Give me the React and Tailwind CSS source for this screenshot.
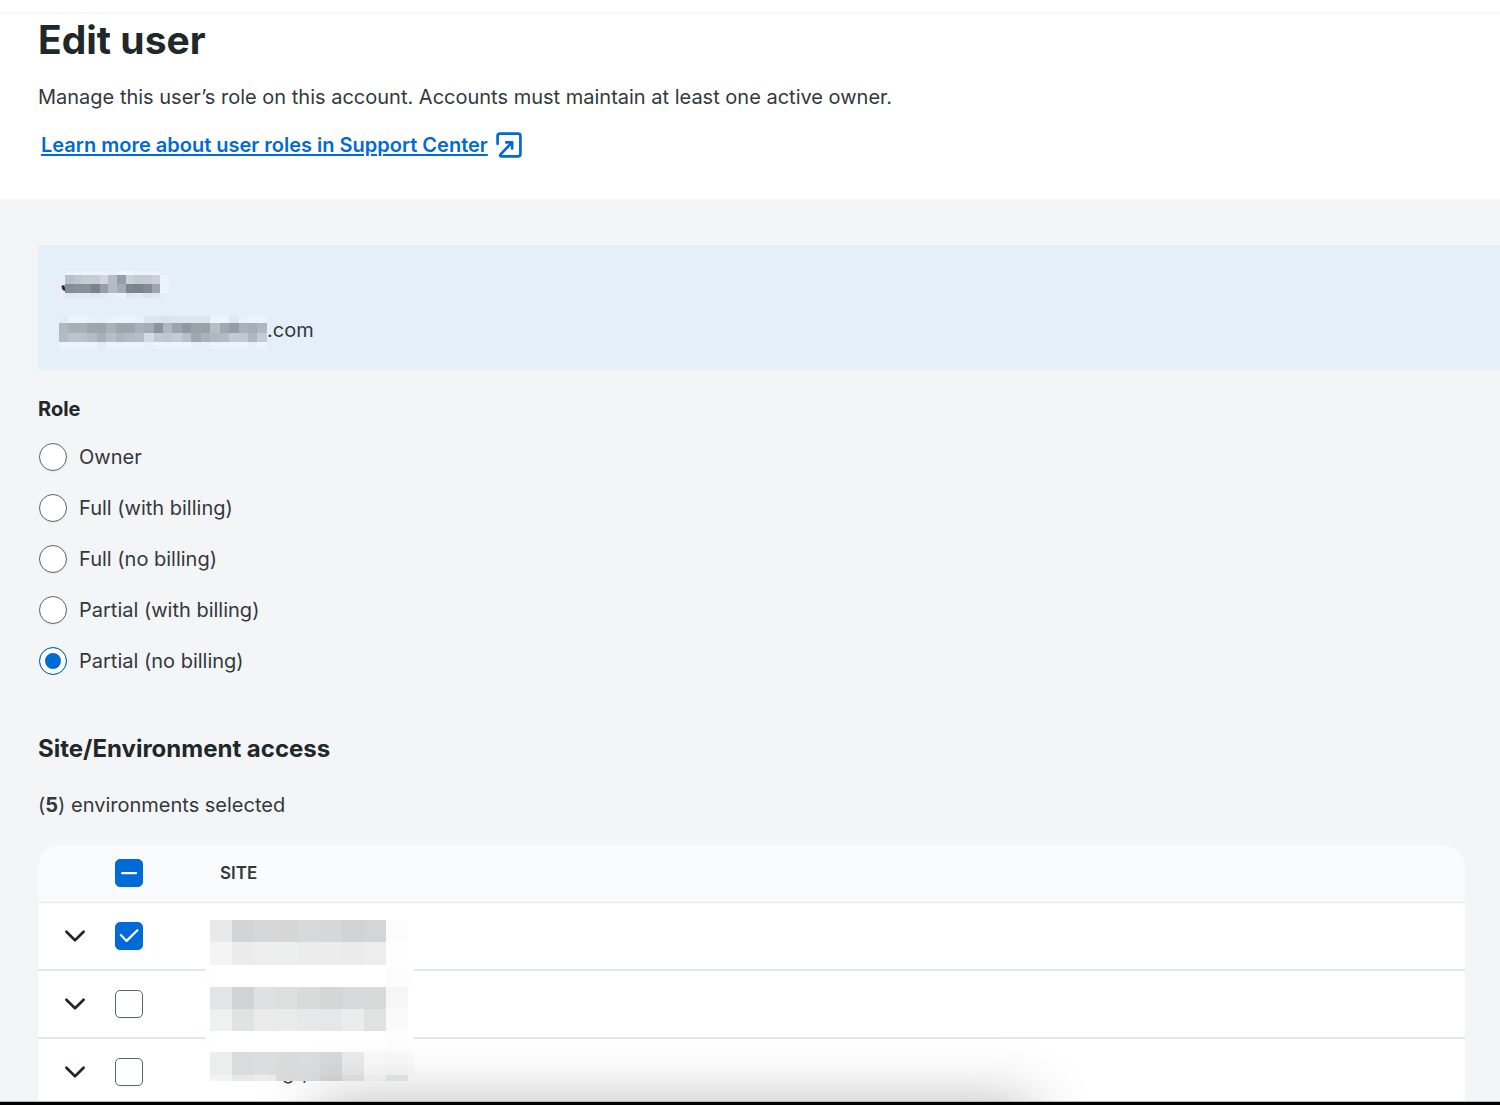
import React, { useState } from 'react';

const ROLES = [
  { value: 'owner', label: 'Owner' },
  { value: 'full-billing', label: 'Full (with billing)' },
  { value: 'full', label: 'Full (no billing)' },
  { value: 'partial-billing', label: 'Partial (with billing)' },
  { value: 'partial', label: 'Partial (no billing)' },
];

const SITES = [
  { id: 'site-1', tail: '' },
  { id: 'site-2', tail: '' },
  { id: 'site-3', tail: 'grp' },
];

// Redaction blocks: each row is { y, h, colors }, null leaves a cell empty
const NAME_MASK = [
  { y: 0, h: 4, colors: ['#ebf3fb', '#ebf3fb', '#ebf3fb', '#ebf3fb', '#ebf3fb', '#e8f1fa', '#edf5fd', '#edf5fd', '#ebf3fb', '#ebf3fb', '#ebf3fb', null] },
  { y: 4, h: 9, colors: ['#b7c0c5', '#bfc7cc', '#c4ccd4', '#c4cdd3', '#cfd7db', '#b5bec8', '#969eaa', '#c8d0d8', '#c2cad2', '#c2cad2', '#c9d0d8', '#ebf3fd'] },
  { y: 13, h: 9, colors: ['#858d97', '#88909a', '#88909a', '#7a828a', '#969fa8', '#b2bbc7', '#a2abb6', '#7c848d', '#7a828b', '#838b96', '#9da6b0', '#ebf3fd'] },
  { y: 22, h: 5, colors: ['#dfe8f0', '#e1eaf3', '#e1eaf3', '#dfe8f0', '#e2ebf5', '#e6eff9', '#ebf4fd', '#dde6ee', '#e2ebf4', '#dde6ee', '#dfe8f0', null] },
];

const EMAIL_MASK = [
  { y: 0, h: 7, colors: ['#e3ecf6', '#ebf4fe', '#ebf4fe', '#e9f2fc', '#e6f0fa', '#e9f2fc', '#ebf4fe', '#ebf4fe', '#e9f2fc', '#dce5ee', '#dce5ee', '#d9e2ea', '#dce5ed', '#dee7f0', '#dce5ee', '#dce5ee', '#ebf4fe', '#ebf4fe', '#dfe8f1', '#e9f2fc', '#ebf4fe', '#ebf4fe'] },
  { y: 7, h: 10, colors: ['#b0b8c0', '#a7afb7', '#a7afb7', '#9da5ad', '#9da5ad', '#a9b1b9', '#9da5ad', '#9da5ad', '#a9b2bb', '#a3abb4', '#89929d', '#afb8c2', '#9da6b0', '#919aa4', '#9ba3ac', '#98a0a8', '#b6bfc8', '#a0a9b2', '#959ea7', '#a9b1ba', '#a5adb6', '#afb7c1'] },
  { y: 17, h: 9, colors: ['#b3bbc3', '#bcc5cb', '#bac3c9', '#b4bcc4', '#a7afb7', '#b7c0c8', '#adb6be', '#b3bcc4', '#b6bfc6', '#d1dbe7', '#c0cad0', '#bdc7cc', '#c3ccd2', '#b8c1c7', '#9fa8b0', '#aab3ba', '#b0b9c0', '#b3bcc3', '#c2cbd2', '#c0c9d0', '#adb6be', '#c3ccd3'] },
  { y: 26, h: 7, colors: ['#ebf4fe', '#ebf4fe', '#ebf4fe', '#ebf4fe', '#e3ecf6', '#ebf4fe', '#ebf4fe', '#ebf4fe', '#ebf4fe', '#e6effa', '#ebf4fe', '#ebf4fe', '#ebf4fe', '#ebf4fe', '#e6effa', '#e6effa', '#ebf4fe', '#ebf4fe', '#ebf4fe', '#ebf4fe', '#e6effa', '#ebf4fe'] },
];

const SITE_MASK = [
  { y: 0, h: 22, colors: ['#e9e9ea', '#d3d4d6', '#d6d7d9', '#d5d6d5', '#d8d9db', '#d6d7d9', '#d1d2d4', '#d4d5d7', '#fcfcfc'] },
  { y: 22, h: 23, colors: ['#f4f4f4', '#ebebeb', '#eeeeee', '#edefee', '#ececec', '#ececec', '#ebebeb', '#ededed', '#fefefe'] },
  { y: 45, h: 22, colors: ['#ffffff', '#ffffff', '#ffffff', '#ffffff', '#ffffff', '#ffffff', '#ffffff', '#ffffff', '#fdfdfd'] },
  { y: 67, h: 22, colors: ['#e3e4e6', '#d1d2d4', '#dfe0e2', '#dddfde', '#d9dbda', '#d5d7d6', '#d7d8da', '#d7d9d8', '#f6f6f6'] },
  { y: 89, h: 22, colors: ['#eff1f0', '#e1e3e2', '#ebebeb', '#e9ebea', '#e7e8ea', '#e6e7e9', '#ebedec', '#e0e2e1', '#fafafa'] },
  { y: 111, h: 21, colors: ['#ffffff', '#ffffff', '#ffffff', '#ffffff', '#ffffff', '#ffffff', '#ffffff', '#ffffff', '#fdfdfd'] },
  { y: 132, h: 23, colors: ['#eceeed', '#dadbdd', '#dcdddf', '#dadcdb', '#dcdddf', '#d8d9db', '#ebebeb', '#fbfbfb', '#f9f9f9'] },
  { y: 155, h: 6, colors: ['#f3f3f3', '#e7e8ea', '#ebecee', '#dadcdb', '#dcdddf', '#dad6d5', '#e6e6e6', '#f9f9f9', '#e9edec'] },
];

const Mosaic = ({ rows, cell }) =>
  rows.map((row) =>
    row.colors.map((color, i) =>
      color ? (
        <rect
          key={`${row.y}-${i}`}
          x={i * cell}
          y={row.y}
          width={cell + 0.2}
          height={row.h}
          fill={color}
        />
      ) : null,
    ),
  );

const ExternalIcon = () => (
  <svg width="26" height="26" viewBox="0 0 26 26" fill="none" stroke="currentColor" strokeWidth="2.7" strokeLinecap="round" strokeLinejoin="round" aria-hidden="true">
    <path d="M1.6 11.8V4a2.4 2.4 0 0 1 2.4-2.4h18A2.4 2.4 0 0 1 24.4 4v18a2.4 2.4 0 0 1-2.4 2.4H5.4c-1.2 0-1.6-1.2-.8-2L15.8 10.6" />
    <path d="M10.2 10.4h5.9v6" />
  </svg>
);

const ChevronIcon = () => (
  <svg width="22" height="14" viewBox="0 0 22 14" fill="none" stroke="currentColor" strokeWidth="2.7" strokeLinecap="round" strokeLinejoin="round" aria-hidden="true">
    <path d="M2.4 2.8 11 11.2l8.6-8.4" />
  </svg>
);

const Checkbox = ({ label, checked, indeterminate, onChange }) => (
  <span className="grid size-7 place-items-center">
    <input
      type="checkbox"
      aria-label={label}
      checked={checked}
      onChange={onChange}
      className={`col-start-1 row-start-1 size-7 cursor-pointer appearance-none rounded-[5px] border shadow-xs ${
        checked || indeterminate ? 'border-[#006bd6] bg-[#006bd6]' : 'border-[#5a666f] bg-white'
      }`}
    />
    {(checked || indeterminate) && (
      <svg
        viewBox="0 0 28 28"
        className="pointer-events-none col-start-1 row-start-1 size-7"
        fill="none"
        stroke="white"
        strokeWidth="2.2"
        strokeLinecap="round"
        strokeLinejoin="round"
        aria-hidden="true"
      >
        {indeterminate ? <path d="M7.2 14.2h13.8" /> : <path d="M5.8 13 11.6 18.9 22.4 8.2" />}
      </svg>
    )}
  </span>
);

const App = () => {
  const [role, setRole] = useState('partial');
  const [selected, setSelected] = useState(['site-1']);

  const toggleSite = (id) =>
    setSelected((prev) =>
      prev.includes(id) ? prev.filter((s) => s !== id) : [...prev, id],
    );

  const allSelected = selected.length === SITES.length;
  const toggleAll = () => setSelected(allSelected ? [] : SITES.map((s) => s.id));

  return (
    <div className="flex h-screen flex-col overflow-hidden bg-[#f4f5f7] font-['Inter',sans-serif] text-xl leading-6 text-[#32393c]">
      <div className="relative min-h-0 flex-1 overflow-hidden">
        <header className="bg-white pt-3">
          <div className="border-t-2 border-[#f4f6f7] pb-[41px] pl-[38px]">
            <h1 className="pt-1 text-[39px] leading-[44px] font-bold text-[#21282a]">Edit user</h1>
            <p className="mt-[23px]">
              Manage this user’s role on this account. Accounts must maintain at least one active owner.
            </p>
            <a
              href="#support"
              className="mt-[23px] ml-[3px] inline-flex items-center gap-2 align-top font-semibold text-[#006bd6]"
            >
              <span className="underline decoration-2 underline-offset-2">
                Learn more about user roles in Support Center
              </span>
              <ExternalIcon />
            </a>
          </div>
        </header>

        <main className="pt-[46px] pl-[38px]">
          <section className="bg-[#e5effa] pt-[26px] pb-[21px] pl-[21px]">
            <div className="relative h-[27px] leading-[27px] font-bold text-[#21282a]">
              <span className="pl-[2px]">J</span>
              <svg className="absolute top-0 left-[6px]" width="104" height="27" viewBox="0 0 104 27" shapeRendering="crispEdges" aria-hidden="true">
                <Mosaic rows={NAME_MASK} cell={8.67} />
              </svg>
            </div>
            <div className="mt-[18px] flex">
              <svg width="208" height="33" viewBox="0 0 208 33" shapeRendering="crispEdges" aria-hidden="true">
                <Mosaic rows={EMAIL_MASK} cell={9.45} />
              </svg>
              <span className="leading-7">.com</span>
            </div>
          </section>

          <fieldset className="mt-[27px]">
            <legend className="font-bold text-[#21282a]">Role</legend>
            <div className="mt-[22px] flex flex-col gap-[23px]">
              {ROLES.map((r) => (
                <label key={r.value} className="flex w-fit cursor-pointer items-center gap-3 pl-px leading-7">
                  <input
                    type="radio"
                    name="role"
                    value={r.value}
                    checked={role === r.value}
                    onChange={() => setRole(r.value)}
                    className="size-7 shrink-0 appearance-none rounded-full border border-[#5a666f] bg-white shadow-xs checked:border-[#006bd6] checked:bg-[#006bd6] checked:shadow-[inset_0_0_0_5px_white]"
                  />
                  {r.label}
                </label>
              ))}
            </div>
          </fieldset>

          <h2 className="mt-[58px] text-2xl leading-8 font-bold text-[#21282a]">Site/Environment access</h2>
          <p className="mt-7">
            (<b className="font-bold">5</b>) environments selected
          </p>

          <div className="relative mt-7 mr-[35px] overflow-hidden rounded-t-[24px] bg-white">
            <table className="w-full border-collapse text-left">
              <thead>
                <tr className="h-[57px] border-b border-[#e3e8ea] bg-[#fafbfd]">
                  <th className="w-[77px]"></th>
                  <th className="w-[105px]">
                    <Checkbox
                      label="Select all sites"
                      checked={allSelected}
                      indeterminate={selected.length > 0 && !allSelected}
                      onChange={toggleAll}
                    />
                  </th>
                  <th className="text-[17px] font-semibold">SITE</th>
                </tr>
              </thead>
              <tbody>
                {SITES.map((site, i) => (
                  <tr key={site.id} className="h-[68px] border-b-2 border-[#e3e8ed]">
                    <td>
                      <button
                        type="button"
                        aria-label={`Expand site ${i + 1}`}
                        className="ml-[26px] flex size-[22px] items-center justify-center text-[#21282a]"
                      >
                        <ChevronIcon />
                      </button>
                    </td>
                    <td>
                      <Checkbox
                        label={`Select site ${i + 1}`}
                        checked={selected.includes(site.id)}
                        onChange={() => toggleSite(site.id)}
                      />
                    </td>
                    <td className="pl-[62px]">{site.tail}</td>
                  </tr>
                ))}
              </tbody>
            </table>
            <svg className="absolute top-[75px] left-[168px]" width="208" height="161" viewBox="-4 0 208 161" shapeRendering="crispEdges" aria-hidden="true">
              <rect x="-4" y="45" width="208" height="22" fill="#fefefe" />
              <rect x="-4" y="111" width="208" height="21" fill="#fefefe" />
              <rect x="198" y="132" width="6" height="23" fill="#fbfbfb" />
              <Mosaic rows={SITE_MASK} cell={22} />
            </svg>
          </div>
        </main>

        {/* shadow cast by the bar under the page */}
        <div className="pointer-events-none absolute top-full right-[31%] left-[21%] h-24 rounded-lg shadow-[0_0_60px_rgba(0,0,0,0.26)]" />
      </div>
      <div className="h-1 shrink-0 border-t border-[#b4b9b9] bg-black" />
    </div>
  );
};

export default App;
